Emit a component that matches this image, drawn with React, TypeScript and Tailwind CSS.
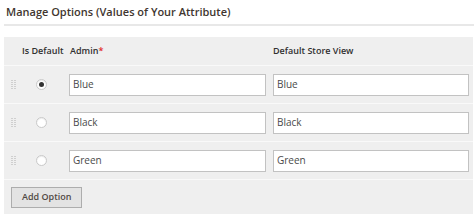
import React from 'react';

// Manage Options panel – attribute option rows with default radio

interface OptionRow {
  admin: string;
  store: string;
  isDefault: boolean;
}

const rows: OptionRow[] = [
  { admin: 'Blue', store: 'Blue', isDefault: true },
  { admin: 'Black', store: 'Black', isDefault: false },
  { admin: 'Green', store: 'Green', isDefault: false },
];

const DragHandle = () => (
  <svg width="5" height="10" viewBox="0 0 5 10" className="block">
    {[0, 2, 4, 6, 8].map((y) =>
      [0, 3].map((x) => (
        <rect key={`${x}-${y}`} x={x} y={y} width="2" height="1" fill="#cfcfcf" />
      ))
    )}
  </svg>
);

const Radio = ({ checked }: { checked: boolean }) => (
  <span className="flex h-[11px] w-[11px] items-center justify-center rounded-full border border-[#c9c9c9] bg-white shadow-[inset_0_1px_1px_rgba(0,0,0,0.08)]">
    {checked && <span className="h-[5px] w-[5px] rounded-full bg-[#333]" />}
  </span>
);

const TextInput = ({ value }: { value: string }) => (
  <div className="flex h-[22px] items-center border border-[#c2c2c2] bg-white pl-[3px] text-[10px] text-[#4a4a4a]">
    {value}
  </div>
);

export default function App() {
  return (
    <div className="h-[215px] w-[474px] bg-white font-['Open_Sans',sans-serif] text-[#303030]">
      <div className="pl-[6px] pt-[3px] text-[11px] font-semibold leading-[18px] text-[#41362f]">
        Manage Options (Values of Your Attribute)
      </div>
      <div className="ml-[4px] mt-[3px] h-[2px] bg-[#e8e8e8]" />

      <div className="ml-[4px] mr-[1px] mt-[11px] bg-[#efefef]">
        {/* header */}
        <div className="flex h-[29px] items-center whitespace-nowrap border-b border-[#f9f9f9] text-[9px] font-semibold text-[#303030]">
          <div className="w-[18px]" />
          <div className="w-[48px]">Is Default</div>
          <div className="w-[203px]">
            Admin<span className="text-[#e22626]">*</span>
          </div>
          <div>Default Store View</div>
        </div>

        {rows.map((r) => (
          <div
            key={r.admin}
            className="flex h-[38px] items-center border-b border-[#f9f9f9]"
          >
            <div className="flex w-[32px] justify-start pl-[7px]">
              <DragHandle />
            </div>
            <div className="flex w-[33px] justify-start">
              <Radio checked={r.isDefault} />
            </div>
            <div className="w-[197px]">
              <TextInput value={r.admin} />
            </div>
            <div className="ml-[7px] w-[196px]">
              <TextInput value={r.store} />
            </div>
          </div>
        ))}

        <div className="flex h-[34px] items-center pl-[7px]">
          <button className="flex h-[21px] items-center border border-[#adadad] bg-[#e3e3e3] px-[10px] text-[9px] font-semibold text-[#514943]">
            Add Option
          </button>
        </div>
      </div>
    </div>
  );
}
